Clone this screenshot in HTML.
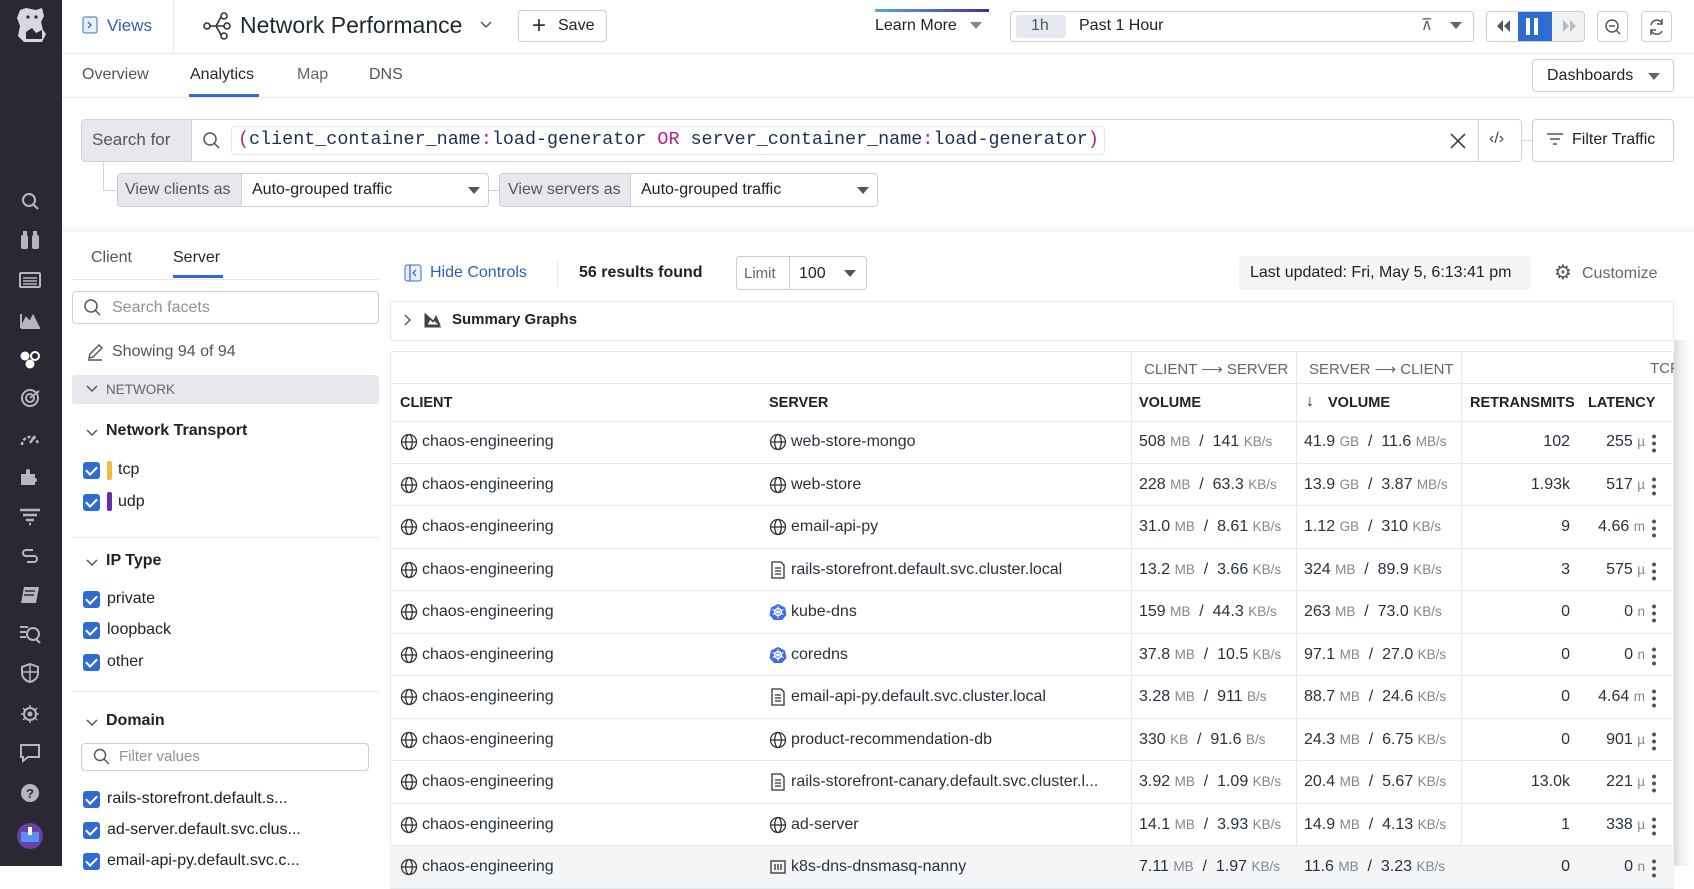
<!DOCTYPE html>
<html><head><meta charset="utf-8">
<style>
*{box-sizing:border-box;margin:0;padding:0}
body{width:1694px;height:866px;overflow:hidden;background:#fff;font-family:"Liberation Sans",sans-serif;color:#28323c;position:relative;font-size:16px}
.a{position:absolute}
.sb{left:0;top:0;width:62px;height:866px;background:#2b2833}
.ic{position:absolute;left:19px;width:22px;height:20px}
.btn{position:absolute;border:1px solid #c9ced6;border-radius:4px;background:#fff}
.t{position:absolute;white-space:nowrap}
.cb{position:absolute;left:83px;width:17px;height:17px;background:#2f6bd0;border-radius:3px}
.cb:after{content:"";position:absolute;left:5px;top:2px;width:5px;height:9px;border:solid #fff;border-width:0 2px 2px 0;transform:rotate(45deg)}
.row{position:absolute;left:390px;width:1284px;height:42.5px;border-bottom:1px solid #e6e9ed;font-size:16px}
.row span{position:absolute;top:12px;white-space:nowrap}
.u{color:#7f8891;font-size:13.5px;font-style:normal}
.dots{position:absolute;left:1262px;top:12px;width:4px;height:20px;background:radial-gradient(circle,#555 1.8px,transparent 2.2px) 0 0/4px 7px repeat-y}
</style></head><body>

<div class="a sb">
 <svg class="a" style="left:14px;top:6px" width="34" height="38" viewBox="0 0 34 38"><path d="M6 4 L12 2 L22 4 L28 2 L30 10 L27 16 L29 24 L32 28 L28 36 L10 36 L4 30 L6 20 L3 12Z" fill="#d9d6de"/><path d="M12 26 L18 22 L22 27 L28 24 L28 33 L12 33Z" fill="#2b2833"/><circle cx="14" cy="11" r="1.6" fill="#2b2833"/><circle cx="22" cy="11" r="1.6" fill="#2b2833"/></svg>
 <svg class="ic" style="top:191px" viewBox="0 0 22 20"><circle cx="10" cy="9" r="6" fill="none" stroke="#b9b5c0" stroke-width="2"/><path d="M14 13l5 5" stroke="#b9b5c0" stroke-width="2"/></svg>
 <svg class="ic" style="top:230px" viewBox="0 0 22 20"><rect x="2" y="5" width="7" height="14" rx="2" fill="#b9b5c0"/><rect x="13" y="5" width="7" height="14" rx="2" fill="#b9b5c0"/><rect x="4" y="1" width="4" height="5" fill="#b9b5c0"/><rect x="14" y="1" width="4" height="5" fill="#b9b5c0"/></svg>
 <svg class="ic" style="top:270px" viewBox="0 0 22 20"><rect x="1" y="3" width="20" height="14" rx="1" fill="none" stroke="#b9b5c0" stroke-width="2"/><path d="M4 8h14M4 11h14M4 14h14" stroke="#b9b5c0" stroke-width="1.5"/></svg>
 <svg class="ic" style="top:310px" viewBox="0 0 22 20"><path d="M2 18V4M2 18h19M3 16l4-8 4 4 3-6 5 10z" stroke="#b9b5c0" stroke-width="2" fill="#b9b5c0"/></svg>
 <svg class="ic" style="top:350px" viewBox="0 0 22 20"><circle cx="6" cy="6" r="4.5" fill="#fff"/><circle cx="16" cy="6" r="4" fill="none" stroke="#fff" stroke-width="2"/><circle cx="11" cy="14" r="4.5" fill="#fff"/></svg>
 <svg class="ic" style="top:388px" viewBox="0 0 22 20"><circle cx="11" cy="10" r="8" fill="none" stroke="#b9b5c0" stroke-width="2"/><circle cx="11" cy="10" r="4" fill="none" stroke="#b9b5c0" stroke-width="2"/><path d="M11 10l9-7" stroke="#b9b5c0" stroke-width="2"/></svg>
 <svg class="ic" style="top:429px" viewBox="0 0 22 20"><path d="M3 16A8 8 0 1 1 19 16" fill="none" stroke="#b9b5c0" stroke-width="2.5" stroke-dasharray="3 2"/><path d="M11 14l5-7" stroke="#b9b5c0" stroke-width="2.5"/></svg>
 <svg class="ic" style="top:466px" viewBox="0 0 22 20"><path d="M2 8h5V5a2 2 0 0 1 4 0v3h5v4a2 2 0 0 1 0 4v3H2z" fill="#b9b5c0"/></svg>
 <svg class="ic" style="top:506px" viewBox="0 0 22 20"><path d="M1 4h20M4 9h14M7 14h8M10 18h2" stroke="#b9b5c0" stroke-width="2.5"/></svg>
 <svg class="ic" style="top:546px" viewBox="0 0 22 20"><path d="M14 4H7a3 3 0 0 0 0 6h8a3 3 0 0 1 0 6H8" fill="none" stroke="#b9b5c0" stroke-width="2"/></svg>
 <svg class="ic" style="top:585px" viewBox="0 0 22 20"><path d="M5 2h15l-3 16H2z" fill="#b9b5c0"/><path d="M6 6h10M5 10h10" stroke="#2b2833" stroke-width="1.5"/></svg>
 <svg class="ic" style="top:624px" viewBox="0 0 22 20"><path d="M1 3h8M1 8h6M1 13h6" stroke="#b9b5c0" stroke-width="2"/><circle cx="14" cy="10" r="6" fill="none" stroke="#b9b5c0" stroke-width="2"/><path d="M17 15l4 4" stroke="#b9b5c0" stroke-width="2"/></svg>
 <svg class="ic" style="top:663px" viewBox="0 0 22 20"><path d="M11 1l8 3v6c0 5-4 8-8 9-4-1-8-4-8-9V4z" fill="none" stroke="#b9b5c0" stroke-width="2"/><path d="M11 1v18M3 9h16" stroke="#b9b5c0" stroke-width="1.5"/></svg>
 <svg class="ic" style="top:704px" viewBox="0 0 22 20"><circle cx="11" cy="10" r="6" fill="none" stroke="#b9b5c0" stroke-width="2"/><circle cx="11" cy="10" r="2.5" fill="#b9b5c0"/><path d="M11 1v3M11 16v3M2 10h3M17 10h3M4 4l2 2M16 14l2 2M4 16l2-2M16 6l2-2" stroke="#b9b5c0" stroke-width="1.5"/></svg>
 <svg class="ic" style="top:743px" viewBox="0 0 22 20"><path d="M2 2h18v12H9l-5 4v-4H2z" fill="none" stroke="#b9b5c0" stroke-width="2"/></svg>
 <svg class="ic" style="top:783px" viewBox="0 0 22 20"><circle cx="11" cy="10" r="9" fill="#b9b5c0"/><text x="11" y="15" font-size="13" font-weight="bold" text-anchor="middle" fill="#2b2833" font-family="Liberation Sans">?</text></svg>
 <div class="a" style="left:17px;top:823px;width:26px;height:26px;border-radius:50%;background:#6b3fa8;overflow:hidden"><div class="a" style="left:4px;top:9px;width:18px;height:10px;background:#5c8ff0"></div><div class="a" style="left:11px;top:4px;width:4px;height:8px;background:#fff"></div></div>
</div>

<div class="a" style="left:62px;top:53px;width:1632px;height:1px;background:#e4e7eb"></div>
<div class="a" style="left:173px;top:0;width:1px;height:53px;background:#e4e7eb"></div>
<svg class="a" style="left:82px;top:16px" width="16" height="18" viewBox="0 0 16 18"><rect x="1" y="1" width="14" height="16" rx="2" fill="#e8eefa" stroke="#3b6cc7"/><path d="M6 6l3 3-3 3" fill="none" stroke="#3b6cc7" stroke-width="1.4"/></svg>
<div class="t" style="left:107px;top:16px;font-size:17px;color:#2f5fb3">Views</div>
<svg class="a" style="left:202px;top:12px" width="30" height="28" viewBox="0 0 30 28"><g fill="none" stroke="#333" stroke-width="1.6"><circle cx="5" cy="14" r="3"/><circle cx="22" cy="4" r="3"/><circle cx="25" cy="14" r="3"/><circle cx="22" cy="24" r="3"/><path d="M8 14h14M14 14L19 5M14 14l5 9"/></g></svg>
<div class="t" style="left:240px;top:12px;font-size:23px;color:#1f2930">Network Performance</div>
<svg class="a" style="left:479px;top:20px" width="14" height="10"><path d="M2 2l5 5 5-5" fill="none" stroke="#555" stroke-width="1.5"/></svg>
<div class="btn" style="left:518px;top:10px;width:89px;height:32px"></div>
<div class="t" style="left:532px;top:12px;font-size:24px;color:#333">+</div>
<div class="t" style="left:558px;top:17px;font-size:16px;color:#222">Save</div>
<div class="a" style="left:875px;top:9px;width:114px;height:3px;background:linear-gradient(90deg,#5aa6e0,#4a2ab0)"></div>
<div class="t" style="left:875px;top:17px;font-size:16px;color:#222">Learn More</div>
<svg class="a" style="left:970px;top:22px" width="12" height="8"><path d="M0 0h12L6 7z" fill="#888"/></svg>
<div class="btn" style="left:1010px;top:11px;width:464px;height:31px"></div>
<div class="a" style="left:1016px;top:15px;width:50px;height:23px;background:#e6e9ef;border-radius:3px"></div>
<div class="t" style="left:1031px;top:17px;font-size:16px;color:#555">1h</div>
<div class="t" style="left:1079px;top:17px;font-size:16px;color:#222">Past 1 Hour</div>
<div class="t" style="left:1421px;top:15px;font-size:16px;color:#666">⊼</div>
<svg class="a" style="left:1450px;top:22px" width="12" height="8"><path d="M0 0h12L6 7z" fill="#666"/></svg>
<div class="btn" style="left:1486px;top:11px;width:99px;height:31px;overflow:hidden">
 <div class="a" style="left:31px;top:0;width:34px;height:31px;background:#2f6bd0"></div>
 <div class="a" style="left:65px;top:0;width:34px;height:31px;background:#f1f2f4"></div>
</div>
<svg class="a" style="left:1494px;top:18px" width="20" height="16"><path d="M9 2L3 8l6 6zM16 2l-6 6 6 6z" fill="#555"/></svg>
<div class="a" style="left:1526px;top:18px;width:4px;height:17px;background:#fff"></div><div class="a" style="left:1534px;top:18px;width:4px;height:17px;background:#fff"></div>
<svg class="a" style="left:1559px;top:18px" width="20" height="16"><path d="M4 2l6 6-6 6zM11 2l6 6-6 6z" fill="#bbb"/></svg>
<div class="btn" style="left:1597px;top:11px;width:31px;height:31px"></div>
<svg class="a" style="left:1603px;top:17px" width="20" height="20"><circle cx="9" cy="9" r="6" fill="none" stroke="#555" stroke-width="1.5"/><path d="M6 9h6M13 13l4 4" stroke="#555" stroke-width="1.5"/></svg>
<div class="btn" style="left:1641px;top:11px;width:31px;height:31px"></div>
<svg class="a" style="left:1647px;top:17px" width="20" height="20"><path d="M15 6A6 6 0 0 0 4 8M4 13a6 6 0 0 0 11 1" fill="none" stroke="#555" stroke-width="1.5"/><path d="M15 2v5h-5M4 18v-5h5" fill="none" stroke="#555" stroke-width="1.5"/></svg>

<div class="t" style="left:82px;top:66px;font-size:16px;color:#555">Overview</div>
<div class="t" style="left:190px;top:66px;font-size:16px;color:#1f2930">Analytics</div>
<div class="t" style="left:297px;top:66px;font-size:16px;color:#666">Map</div>
<div class="t" style="left:369px;top:66px;font-size:16px;color:#555">DNS</div>
<div class="a" style="left:189px;top:94px;width:70px;height:3px;background:#2f6bd0"></div>
<div class="a" style="left:62px;top:97px;width:1632px;height:1px;background:#e4e7eb"></div>
<div class="btn" style="left:1532px;top:59px;width:142px;height:33px"></div>
<div class="t" style="left:1547px;top:67px;font-size:16px;color:#222">Dashboards</div>
<svg class="a" style="left:1648px;top:73px" width="12" height="8"><path d="M0 0h12L6 7z" fill="#666"/></svg>

<div class="btn" style="left:81px;top:119px;width:1441px;height:43px;overflow:hidden;border-color:#cfd4db">
 <div class="a" style="left:0;top:0;width:110px;height:43px;background:#e6e8ee;border-right:1px solid #cfd4db"></div>
</div>
<div class="t" style="left:92px;top:130px;font-size:17px;color:#555">Search for</div>
<svg class="a" style="left:202px;top:131px" width="20" height="20"><circle cx="8" cy="8" r="6" fill="none" stroke="#555" stroke-width="1.5"/><path d="M12 12l5 5" stroke="#555" stroke-width="1.5"/></svg>
<div class="a" style="left:231px;top:126px;width:874px;height:29px;border:1px solid #e3e6ea;border-radius:4px"></div>
<div class="t" style="left:238px;top:129px;font-family:'Liberation Mono',monospace;font-size:18.4px;color:#1f2d5a"><span style="color:#b0218a">(</span>client_container_name<span style="color:#b0218a">:</span>load-generator <span style="color:#b0218a">OR</span> server_container_name<span style="color:#b0218a">:</span>load-generator<span style="color:#b0218a">)</span></div>
<svg class="a" style="left:1449px;top:132px" width="18" height="18"><path d="M2 2l14 14M16 2L2 16" stroke="#444" stroke-width="1.6"/></svg>
<div class="a" style="left:1478px;top:119px;width:1px;height:43px;background:#cfd4db"></div>
<div class="t" style="left:1489px;top:130px;font-size:16px;color:#444">‹/›</div>
<div class="a" style="left:1522px;top:140px;width:10px;height:1px;background:#cfd4db"></div>
<div class="btn" style="left:1532px;top:119px;width:142px;height:43px"></div>
<svg class="a" style="left:1546px;top:132px" width="18" height="16"><path d="M1 2h16M4 7h10M7 12h4" stroke="#555" stroke-width="1.6"/></svg>
<div class="t" style="left:1572px;top:131px;font-size:16px;color:#222">Filter Traffic</div>

<div class="a" style="left:103px;top:162px;width:1px;height:29px;background:#cfd4db"></div>
<div class="a" style="left:103px;top:190px;width:14px;height:1px;background:#cfd4db"></div>
<div class="btn" style="left:117px;top:173px;width:372px;height:34px;overflow:hidden"><div class="a" style="left:0;top:0;width:124px;height:34px;background:#e6e8ee;border-right:1px solid #cfd4db"></div></div>
<div class="t" style="left:125px;top:181px;font-size:16px;color:#555">View clients as</div>
<div class="t" style="left:252px;top:181px;font-size:16px;color:#222">Auto-grouped traffic</div>
<svg class="a" style="left:468px;top:187px" width="12" height="8"><path d="M0 0h12L6 7z" fill="#555"/></svg>
<div class="a" style="left:489px;top:190px;width:10px;height:1px;background:#cfd4db"></div>
<div class="btn" style="left:499px;top:173px;width:379px;height:34px;overflow:hidden"><div class="a" style="left:0;top:0;width:131px;height:34px;background:#e6e8ee;border-right:1px solid #cfd4db"></div></div>
<div class="t" style="left:508px;top:181px;font-size:16px;color:#555">View servers as</div>
<div class="t" style="left:641px;top:181px;font-size:16px;color:#222">Auto-grouped traffic</div>
<svg class="a" style="left:857px;top:187px" width="12" height="8"><path d="M0 0h12L6 7z" fill="#555"/></svg>
<div class="a" style="left:62px;top:224px;width:1632px;height:8px;background:linear-gradient(#fff,#f3f4f6)"></div>

<div class="t" style="left:91px;top:249px;font-size:16px;color:#555">Client</div>
<div class="t" style="left:173px;top:249px;font-size:16px;color:#1f2930">Server</div>
<div class="a" style="left:72px;top:279px;width:307px;height:1px;background:#e4e7eb"></div>
<div class="a" style="left:173px;top:275px;width:50px;height:3px;background:#2f6bd0"></div>
<div class="btn" style="left:72px;top:291px;width:307px;height:33px"></div>
<svg class="a" style="left:83px;top:298px" width="20" height="20"><circle cx="8" cy="8" r="6" fill="none" stroke="#555" stroke-width="1.5"/><path d="M12 12l5 5" stroke="#555" stroke-width="1.5"/></svg>
<div class="t" style="left:112px;top:299px;font-size:16px;color:#8b939b">Search facets</div>
<svg class="a" style="left:86px;top:343px" width="18" height="18"><path d="M3 15l1-4L13 2l3 3-9 9zM2 17h14" fill="none" stroke="#555" stroke-width="1.4"/></svg>
<div class="t" style="left:112px;top:343px;font-size:16px;color:#555">Showing 94 of 94</div>
<div class="a" style="left:72px;top:375px;width:307px;height:29px;background:#e6e8ee;border-radius:3px"></div>
<svg class="a" style="left:85px;top:384px" width="14" height="10"><path d="M2 2l5 5 5-5" fill="none" stroke="#555" stroke-width="1.5"/></svg>
<div class="t" style="left:106px;top:382px;font-size:13.5px;color:#666">NETWORK</div>
<svg class="a" style="left:85px;top:428px" width="14" height="10"><path d="M2 2l5 5 5-5" fill="none" stroke="#555" stroke-width="1.5"/></svg>
<div class="t" style="left:106px;top:422px;font-size:16px;font-weight:bold;color:#222">Network Transport</div>
<div class="cb" style="top:462px"></div><div class="a" style="left:107px;top:461px;width:5px;height:19px;background:#f4b942;border-radius:2px"></div><div class="t" style="left:118px;top:461px;color:#222">tcp</div>
<div class="cb" style="top:494px"></div><div class="a" style="left:107px;top:492px;width:5px;height:19px;background:#6a2ab0;border-radius:2px"></div><div class="t" style="left:118px;top:493px;color:#222">udp</div>
<div class="a" style="left:72px;top:537px;width:307px;height:1px;background:#e4e7eb"></div>
<svg class="a" style="left:85px;top:558px" width="14" height="10"><path d="M2 2l5 5 5-5" fill="none" stroke="#555" stroke-width="1.5"/></svg>
<div class="t" style="left:106px;top:552px;font-size:16px;font-weight:bold;color:#222">IP Type</div>
<div class="cb" style="top:591px"></div><div class="t" style="left:107px;top:590px;color:#222">private</div>
<div class="cb" style="top:622px"></div><div class="t" style="left:107px;top:621px;color:#222">loopback</div>
<div class="cb" style="top:654px"></div><div class="t" style="left:107px;top:653px;color:#222">other</div>
<div class="a" style="left:72px;top:691px;width:307px;height:1px;background:#e4e7eb"></div>
<svg class="a" style="left:85px;top:718px" width="14" height="10"><path d="M2 2l5 5 5-5" fill="none" stroke="#555" stroke-width="1.5"/></svg>
<div class="t" style="left:106px;top:712px;font-size:16px;font-weight:bold;color:#222">Domain</div>
<div class="btn" style="left:81px;top:743px;width:288px;height:28px"></div>
<svg class="a" style="left:93px;top:748px" width="18" height="18"><circle cx="7" cy="7" r="5.5" fill="none" stroke="#555" stroke-width="1.4"/><path d="M11 11l5 5" stroke="#555" stroke-width="1.4"/></svg>
<div class="t" style="left:119px;top:748px;font-size:15px;color:#8b939b">Filter values</div>
<div class="cb" style="top:791px"></div><div class="t" style="left:107px;top:790px;color:#222">rails-storefront.default.s...</div>
<div class="cb" style="top:822px"></div><div class="t" style="left:107px;top:821px;color:#222">ad-server.default.svc.clus...</div>
<div class="cb" style="top:853px"></div><div class="t" style="left:107px;top:852px;color:#222">email-api-py.default.svc.c...</div>

<svg class="a" style="left:404px;top:264px" width="18" height="18"><rect x="1" y="1" width="16" height="16" rx="2" fill="#e8eefa" stroke="#3b6cc7"/><path d="M6 1v16M12 6l-3 3 3 3" fill="none" stroke="#3b6cc7" stroke-width="1.3"/></svg>
<div class="t" style="left:430px;top:264px;font-size:16px;color:#2f5fb3">Hide Controls</div>
<div class="a" style="left:557px;top:261px;width:1px;height:26px;background:#e4e7eb"></div>
<div class="t" style="left:579px;top:264px;font-size:16px;font-weight:bold;color:#222">56 results found</div>
<div class="btn" style="left:736px;top:256px;width:131px;height:34px;overflow:hidden"><div class="a" style="left:52px;top:0;width:1px;height:34px;background:#cfd4db"></div></div>
<div class="t" style="left:744px;top:265px;font-size:15px;color:#666">Limit</div>
<div class="t" style="left:799px;top:265px;font-size:16px;color:#222">100</div>
<svg class="a" style="left:844px;top:270px" width="12" height="8"><path d="M0 0h12L6 7z" fill="#555"/></svg>
<div class="a" style="left:1239px;top:256px;width:292px;height:34px;background:#f3f5f7;border-radius:3px"></div>
<div class="t" style="left:1250px;top:264px;font-size:16px;color:#222">Last updated: Fri, May 5, 6:13:41 pm</div>
<div class="t" style="left:1554px;top:260px;font-size:20px;color:#555">⚙</div>
<div class="t" style="left:1582px;top:265px;font-size:16px;color:#666">Customize</div>

<div class="a" style="left:390px;top:301px;width:1284px;height:40px;border:1px solid #e4e7eb;border-radius:3px"></div>
<svg class="a" style="left:403px;top:313px" width="10" height="14"><path d="M2 2l5 5-5 5" fill="none" stroke="#555" stroke-width="1.4"/></svg>
<svg class="a" style="left:424px;top:312px" width="18" height="16"><path d="M1 1v14h16M3 13l3-6 3 3 3-6 4 9z" fill="#444" stroke="#444" stroke-width="1"/></svg>
<div class="t" style="left:452px;top:311px;font-size:15px;font-weight:bold;color:#222">Summary Graphs</div>

<div class="a" style="left:390px;top:351px;width:1284px;height:515px;border:1px solid #e4e7eb;border-radius:3px;overflow:hidden">
 <div class="a" style="left:0;top:31px;width:1284px;height:1px;background:#e6e9ed"></div>
 <div class="a" style="left:0;top:69px;width:1284px;height:1px;background:#e6e9ed"></div>
 <div class="a" style="left:740px;top:0;width:1px;height:515px;background:#e3e6ea"></div>
 <div class="a" style="left:905px;top:0;width:1px;height:515px;background:#e3e6ea"></div>
 <div class="a" style="left:1070px;top:0;width:1px;height:515px;background:#e3e6ea"></div>
</div>
<div class="t" style="left:1144px;top:360px;font-size:15px;color:#666">CLIENT ⟶ SERVER</div>
<div class="t" style="left:1309px;top:360px;font-size:15px;color:#666">SERVER ⟶ CLIENT</div>
<div class="t" style="left:1650px;top:360px;font-size:15px;color:#666">TCP</div>
<div class="t" style="left:400px;top:395px;font-size:14.5px;font-weight:bold;color:#222">CLIENT</div>
<div class="t" style="left:769px;top:395px;font-size:14.5px;font-weight:bold;color:#222">SERVER</div>
<div class="t" style="left:1139px;top:395px;font-size:14.5px;font-weight:bold;color:#222">VOLUME</div>
<div class="t" style="left:1306px;top:393px;font-size:16px;color:#222">↓</div>
<div class="t" style="left:1328px;top:395px;font-size:14.5px;font-weight:bold;color:#222">VOLUME</div>
<div class="t" style="left:1470px;top:395px;font-size:14.5px;font-weight:bold;color:#222">RETRANSMITS</div>
<div class="t" style="left:1588px;top:395px;font-size:14.5px;font-weight:bold;color:#222">LATENCY</div>

<svg width="0" height="0" style="position:absolute"><defs>
<symbol id="g" viewBox="0 0 18 18"><g fill="none" stroke="#333" stroke-width="1.3"><circle cx="9" cy="9" r="7.5"/><ellipse cx="9" cy="9" rx="3.3" ry="7.5"/><path d="M1.5 9h15"/></g></symbol>
<symbol id="d" viewBox="0 0 18 18"><g fill="none" stroke="#333" stroke-width="1.3"><path d="M3 1h9l3 3v13H3z"/><path d="M6 7h6M6 10h6M6 13h6"/></g></symbol>
<symbol id="k" viewBox="0 0 18 18"><path d="M9 1l7 3.5 1.5 7.5L13 17H5L.5 12 2 4.5z" fill="#3b6ee0"/><circle cx="9" cy="9" r="3.5" fill="none" stroke="#fff" stroke-width="1.3"/><path d="M9 3v12M3.5 6.5l11 5M14.5 6.5l-11 5" stroke="#fff" stroke-width="1"/></symbol>
<symbol id="b" viewBox="0 0 18 18"><g fill="none" stroke="#333" stroke-width="1.3"><rect x="2" y="3" width="14" height="12"/><path d="M6 6v6M9 6v6M12 6v6"/></g></symbol>
</defs></svg>

<div class="row" style="top:421px"><svg class="a" style="left:10px;top:12px" width="18" height="18"><use href="#g"/></svg><span style="left:32px">chaos-engineering</span><svg class="a" style="left:379px;top:12px" width="18" height="18"><use href="#g"/></svg><span style="left:401px">web-store-mongo</span><span style="left:749px">508 <i class="u">MB</i> &nbsp;/ &nbsp;141 <i class="u">KB/s</i></span><span style="left:914px">41.9 <i class="u">GB</i> &nbsp;/ &nbsp;11.6 <i class="u">MB/s</i></span><span style="right:104px">102</span><span style="left:1195px;width:60px;overflow:hidden;text-align:right">255 <i class="u">µ</i></span><div class="dots"></div></div>
<div class="row" style="top:463.5px"><svg class="a" style="left:10px;top:12px" width="18" height="18"><use href="#g"/></svg><span style="left:32px">chaos-engineering</span><svg class="a" style="left:379px;top:12px" width="18" height="18"><use href="#g"/></svg><span style="left:401px">web-store</span><span style="left:749px">228 <i class="u">MB</i> &nbsp;/ &nbsp;63.3 <i class="u">KB/s</i></span><span style="left:914px">13.9 <i class="u">GB</i> &nbsp;/ &nbsp;3.87 <i class="u">MB/s</i></span><span style="right:104px">1.93k</span><span style="left:1195px;width:60px;overflow:hidden;text-align:right">517 <i class="u">µ</i></span><div class="dots"></div></div>
<div class="row" style="top:506px"><svg class="a" style="left:10px;top:12px" width="18" height="18"><use href="#g"/></svg><span style="left:32px">chaos-engineering</span><svg class="a" style="left:379px;top:12px" width="18" height="18"><use href="#g"/></svg><span style="left:401px">email-api-py</span><span style="left:749px">31.0 <i class="u">MB</i> &nbsp;/ &nbsp;8.61 <i class="u">KB/s</i></span><span style="left:914px">1.12 <i class="u">GB</i> &nbsp;/ &nbsp;310 <i class="u">KB/s</i></span><span style="right:104px">9</span><span style="left:1195px;width:60px;overflow:hidden;text-align:right">4.66 <i class="u">m</i></span><div class="dots"></div></div>
<div class="row" style="top:548.5px"><svg class="a" style="left:10px;top:12px" width="18" height="18"><use href="#g"/></svg><span style="left:32px">chaos-engineering</span><svg class="a" style="left:379px;top:12px" width="18" height="18"><use href="#d"/></svg><span style="left:401px">rails-storefront.default.svc.cluster.local</span><span style="left:749px">13.2 <i class="u">MB</i> &nbsp;/ &nbsp;3.66 <i class="u">KB/s</i></span><span style="left:914px">324 <i class="u">MB</i> &nbsp;/ &nbsp;89.9 <i class="u">KB/s</i></span><span style="right:104px">3</span><span style="left:1195px;width:60px;overflow:hidden;text-align:right">575 <i class="u">µ</i></span><div class="dots"></div></div>
<div class="row" style="top:591px"><svg class="a" style="left:10px;top:12px" width="18" height="18"><use href="#g"/></svg><span style="left:32px">chaos-engineering</span><svg class="a" style="left:379px;top:12px" width="18" height="18"><use href="#k"/></svg><span style="left:401px">kube-dns</span><span style="left:749px">159 <i class="u">MB</i> &nbsp;/ &nbsp;44.3 <i class="u">KB/s</i></span><span style="left:914px">263 <i class="u">MB</i> &nbsp;/ &nbsp;73.0 <i class="u">KB/s</i></span><span style="right:104px">0</span><span style="left:1195px;width:60px;overflow:hidden;text-align:right">0 <i class="u">n</i></span><div class="dots"></div></div>
<div class="row" style="top:633.5px"><svg class="a" style="left:10px;top:12px" width="18" height="18"><use href="#g"/></svg><span style="left:32px">chaos-engineering</span><svg class="a" style="left:379px;top:12px" width="18" height="18"><use href="#k"/></svg><span style="left:401px">coredns</span><span style="left:749px">37.8 <i class="u">MB</i> &nbsp;/ &nbsp;10.5 <i class="u">KB/s</i></span><span style="left:914px">97.1 <i class="u">MB</i> &nbsp;/ &nbsp;27.0 <i class="u">KB/s</i></span><span style="right:104px">0</span><span style="left:1195px;width:60px;overflow:hidden;text-align:right">0 <i class="u">n</i></span><div class="dots"></div></div>
<div class="row" style="top:676px"><svg class="a" style="left:10px;top:12px" width="18" height="18"><use href="#g"/></svg><span style="left:32px">chaos-engineering</span><svg class="a" style="left:379px;top:12px" width="18" height="18"><use href="#d"/></svg><span style="left:401px">email-api-py.default.svc.cluster.local</span><span style="left:749px">3.28 <i class="u">MB</i> &nbsp;/ &nbsp;911 <i class="u">B/s</i></span><span style="left:914px">88.7 <i class="u">MB</i> &nbsp;/ &nbsp;24.6 <i class="u">KB/s</i></span><span style="right:104px">0</span><span style="left:1195px;width:60px;overflow:hidden;text-align:right">4.64 <i class="u">m</i></span><div class="dots"></div></div>
<div class="row" style="top:718.5px"><svg class="a" style="left:10px;top:12px" width="18" height="18"><use href="#g"/></svg><span style="left:32px">chaos-engineering</span><svg class="a" style="left:379px;top:12px" width="18" height="18"><use href="#g"/></svg><span style="left:401px">product-recommendation-db</span><span style="left:749px">330 <i class="u">KB</i> &nbsp;/ &nbsp;91.6 <i class="u">B/s</i></span><span style="left:914px">24.3 <i class="u">MB</i> &nbsp;/ &nbsp;6.75 <i class="u">KB/s</i></span><span style="right:104px">0</span><span style="left:1195px;width:60px;overflow:hidden;text-align:right">901 <i class="u">µ</i></span><div class="dots"></div></div>
<div class="row" style="top:761px"><svg class="a" style="left:10px;top:12px" width="18" height="18"><use href="#g"/></svg><span style="left:32px">chaos-engineering</span><svg class="a" style="left:379px;top:12px" width="18" height="18"><use href="#d"/></svg><span style="left:401px">rails-storefront-canary.default.svc.cluster.l...</span><span style="left:749px">3.92 <i class="u">MB</i> &nbsp;/ &nbsp;1.09 <i class="u">KB/s</i></span><span style="left:914px">20.4 <i class="u">MB</i> &nbsp;/ &nbsp;5.67 <i class="u">KB/s</i></span><span style="right:104px">13.0k</span><span style="left:1195px;width:60px;overflow:hidden;text-align:right">221 <i class="u">µ</i></span><div class="dots"></div></div>
<div class="row" style="top:803.5px"><svg class="a" style="left:10px;top:12px" width="18" height="18"><use href="#g"/></svg><span style="left:32px">chaos-engineering</span><svg class="a" style="left:379px;top:12px" width="18" height="18"><use href="#g"/></svg><span style="left:401px">ad-server</span><span style="left:749px">14.1 <i class="u">MB</i> &nbsp;/ &nbsp;3.93 <i class="u">KB/s</i></span><span style="left:914px">14.9 <i class="u">MB</i> &nbsp;/ &nbsp;4.13 <i class="u">KB/s</i></span><span style="right:104px">1</span><span style="left:1195px;width:60px;overflow:hidden;text-align:right">338 <i class="u">µ</i></span><div class="dots"></div></div>
<div class="row" style="top:846px;background:#f4f5f7"><svg class="a" style="left:10px;top:12px" width="18" height="18"><use href="#g"/></svg><span style="left:32px">chaos-engineering</span><svg class="a" style="left:379px;top:12px" width="18" height="18"><use href="#b"/></svg><span style="left:401px">k8s-dns-dnsmasq-nanny</span><span style="left:749px">7.11 <i class="u">MB</i> &nbsp;/ &nbsp;1.97 <i class="u">KB/s</i></span><span style="left:914px">11.6 <i class="u">MB</i> &nbsp;/ &nbsp;3.23 <i class="u">KB/s</i></span><span style="right:104px">0</span><span style="left:1195px;width:60px;overflow:hidden;text-align:right">0 <i class="u">n</i></span><div class="dots"></div></div>
<div class="a" style="left:1674px;top:340px;width:20px;height:526px;background:linear-gradient(90deg,#d8dadd,#f3f4f5 40%,#fff)"></div>
</body></html>
